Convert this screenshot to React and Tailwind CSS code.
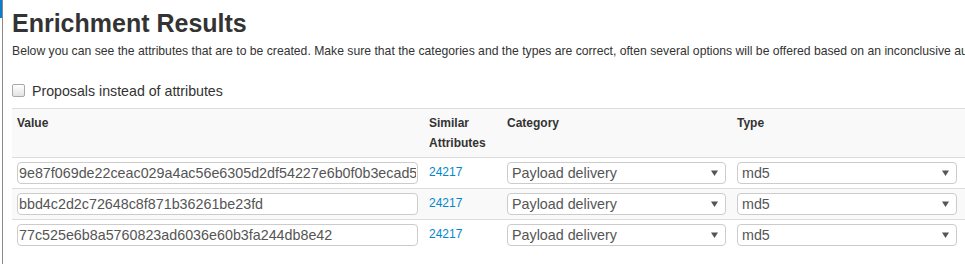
const rows = [
  { value: '9e87f069de22ceac029a4ac56e6305d2df54227e6b0f0b3ecad5', similar: '24217', category: 'Payload delivery', type: 'md5' },
  { value: 'bbd4c2d2c72648c8f871b36261be23fd', similar: '24217', category: 'Payload delivery', type: 'md5' },
  { value: '77c525e6b8a5760823ad6036e60b3fa244db8e42', similar: '24217', category: 'Payload delivery', type: 'md5' },
]

const FakeSelect = ({ text, width }) => (
  <div className={`flex items-center justify-between h-[22px] border border-[#ccc] rounded-[4px] bg-white pl-[4px] pr-[7px] ${width}`}>
    <span className="text-[14.3px] text-[#555] leading-none">{text}</span>
    <svg width="7" height="6" viewBox="0 0 7 6">
      <path d="M0 0.5h7L3.5 6z" fill="#555" />
    </svg>
  </div>
)

export default function App() {
  return (
    <div className="flex h-[264px] w-[965px] overflow-hidden bg-white font-['Liberation_Sans',Arial,sans-serif] text-[#333]">
      {/* sidebar edge */}
      <div className="w-[2px] shrink-0">
        <div className="h-[18px] bg-[#0a7fd0]"></div>
      </div>
      <div className="w-px shrink-0 bg-[#8a8a8a]"></div>

      {/* Content */}
      <div className="flex-1 min-w-0 pl-[9px] overflow-hidden">
        <h2 className="mt-[3px] text-[25px] leading-[40px] font-bold">Enrichment Results</h2>
        <p className="-mt-[2px] text-[12.2px] leading-[20px] whitespace-nowrap">
          Below you can see the attributes that are to be created. Make sure that the categories and the types are correct, often several options will be offered based on an inconclusive automatic resolution.
        </p>

        <label className="mt-[21px] flex items-center h-[20px]">
          <span className="-mt-[3px] w-[13px] h-[13px] border border-[#a9a9a9] rounded-[2px] bg-gradient-to-b from-white to-[#e3e3e3]"></span>
          <span className="ml-[7px] text-[14.2px]">Proposals instead of attributes</span>
        </label>

        <table className="mt-[6px] table-fixed border-collapse w-[1120px] text-[12px] leading-[20px]">
          <colgroup>
            <col className="w-[412px]" />
            <col className="w-[78px]" />
            <col className="w-[230px]" />
            <col className="w-[230px]" />
            <col className="w-[170px]" />
          </colgroup>
          <tbody>
            <tr className="bg-[#f9f9f9] border-t border-[#ddd]">
              <th className="px-[5px] py-[4px] text-left align-top font-bold">Value</th>
              <th className="px-[5px] py-[4px] text-left align-top font-bold">Similar Attributes</th>
              <th className="px-[5px] py-[4px] text-left align-top font-bold">Category</th>
              <th className="px-[5px] py-[4px] text-left align-top font-bold">Type</th>
              <th className="px-[5px] py-[4px] text-left align-top font-bold"></th>
            </tr>
            {rows.map((row, i) => (
              <tr key={i} className={`border-t border-[#ddd] ${i % 2 === 1 ? 'bg-[#f9f9f9]' : 'bg-white'}`}>
                <td className="px-[5px] py-[4px] align-top">
                  <input
                    type="text"
                    readOnly
                    value={row.value}
                    className="block w-[401px] h-[22px] border border-[#ccc] rounded-[4px] bg-white px-[1px] text-[14.3px] text-[#555] outline-none"
                  />
                </td>
                <td className="px-[5px] py-[4px] align-top">
                  <a href="#" className="text-[#0088cc]">{row.similar}</a>
                </td>
                <td className="px-[5px] py-[4px] align-top">
                  <FakeSelect text={row.category} width="w-[219px]" />
                </td>
                <td className="px-[5px] py-[4px] align-top">
                  <FakeSelect text={row.type} width="w-[220px]" />
                </td>
                <td className="px-[5px] py-[4px] align-top"></td>
              </tr>
            ))}
          </tbody>
        </table>
      </div>
    </div>
  )
}
